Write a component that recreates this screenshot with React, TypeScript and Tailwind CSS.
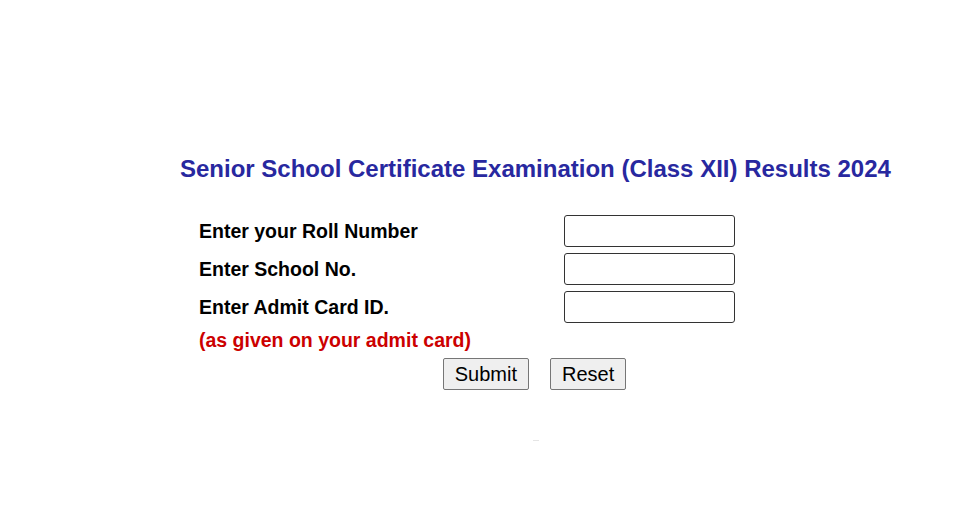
import React from "react";

export default function App() {
  const font = { fontFamily: '"Liberation Sans", Arial, sans-serif' };
  return (
    <div className="min-h-[505px] w-[964px] bg-white" style={font}>
      <div className="ml-[180px] w-[709px] pt-[155px]">
        <h1 className="text-center text-[24px] leading-[28px] font-bold text-[#28289f] whitespace-nowrap">
          Senior School Certificate Examination (Class XII) Results 2024
        </h1>
        <div className="mt-[29px] pl-[19px]">
          <div className="grid grid-cols-[365px_171px]">
            {["Enter your Roll Number", "Enter School No.", "Enter Admit Card ID."].map((l) => (
              <React.Fragment key={l}>
                <div className="flex h-[38px] items-center pt-[1px] text-[19.5px] font-bold text-black">{l}</div>
                <div className="flex h-[38px] items-center">
                  <input className="h-[32px] w-[171px] rounded-[3px] border border-[#333] bg-white outline-none" />
                </div>
              </React.Fragment>
            ))}
          </div>
          <div className="flex h-[28px] items-center pt-[2px] text-[19.5px] font-bold text-[#cc0000]">
            (as given on your admit card)
          </div>
        </div>
        <div className="mt-[4px] flex justify-center gap-[21px]">
          <button className="h-[32px] rounded-[2px] border border-[#767676] bg-[#efefef] px-[11px] text-[20px] text-black">
            Submit
          </button>
          <button className="h-[32px] rounded-[2px] border border-[#767676] bg-[#efefef] px-[11px] text-[20px] text-black">
            Reset
          </button>
        </div>
        <div className="mt-[50px] ml-[353px] h-px w-[6px] bg-[#e5e5e5]" />
      </div>
    </div>
  );
}
